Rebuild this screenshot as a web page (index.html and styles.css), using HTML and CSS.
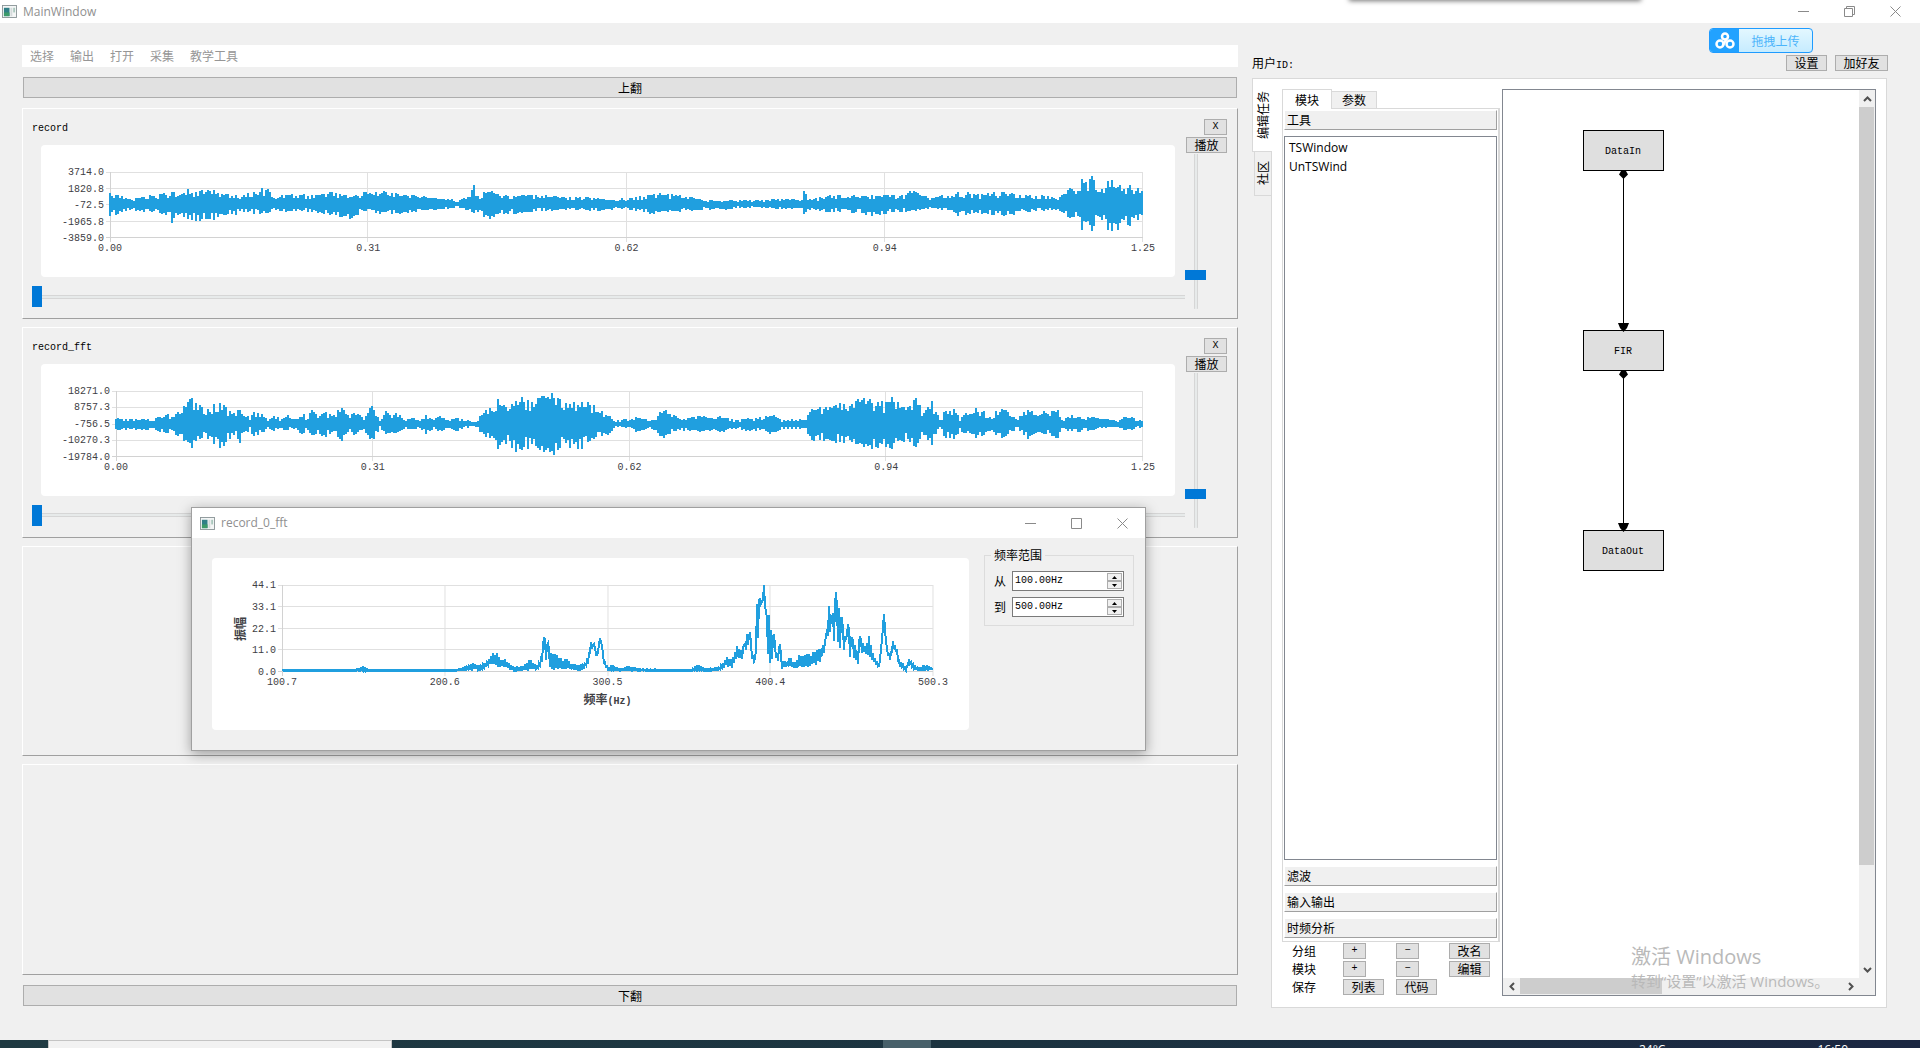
FILE: index.html
```html
<!DOCTYPE html>
<html lang="zh-CN">
<head>
<meta charset="utf-8">
<title>MainWindow</title>
<link rel="stylesheet" href="styles.css">
</head>
<body>
<header class="titlebar">
  <svg class="app-icon" viewBox="0 0 16 14"><rect x="0.5" y="0.5" width="15" height="13" fill="#f4f6f6" stroke="#8b9698"/><rect x="2" y="3" width="6" height="9" fill="#2f7f86"/><rect x="2" y="8" width="6" height="4" fill="#3c9a6a"/><rect x="9" y="3" width="2" height="9" fill="#d5dadb"/><rect x="12" y="3" width="2" height="5" fill="#a9c8bd"/></svg>
  <span class="titlebar-text">MainWindow</span>
  <div class="win-buttons">
    <button aria-label="最小化"><svg viewBox="0 0 11 11"><path d="M0 5.5H11"/></svg></button>
    <button aria-label="还原"><svg viewBox="0 0 11 11"><path d="M0.5 2.5H8.5V10.5H0.5ZM2.5 2.5V0.5H10.5V8.5H8.5"/></svg></button>
    <button aria-label="关闭"><svg viewBox="0 0 11 11"><path d="M0.5 0.5L10.5 10.5M10.5 0.5L0.5 10.5"/></svg></button>
  </div>
  <div class="edge-shadow"></div>
</header>

<main class="workspace">
  <section class="signals">
    <nav class="menubar">
      <button>选择</button><button>输出</button><button>打开</button><button>采集</button><button>教学工具</button>
    </nav>
    <button class="btn page-btn">上翻</button>
    <div class="panels">
      <article class="panel">
        <div class="panel-main">
          <h2 class="mono">record</h2>
          <div class="chart">
            <div class="y-labels"><span>3714.0</span><span>1820.8</span><span>-72.5</span><span>-1965.8</span><span>-3859.0</span></div>
            <svg class="plot" data-plot="record" viewBox="0 0 1033 66" preserveAspectRatio="none"></svg>
            <div class="x-labels"><span>0.00</span><span>0.31</span><span>0.62</span><span>0.94</span><span>1.25</span></div>
          </div>
          <input class="slider" type="range" value="0" aria-label="record 位置">
        </div>
        <div class="panel-side">
          <button class="btn mono close-btn">X</button>
          <button class="btn play-btn">播放</button>
          <input class="slider slider-v" type="range" value="20" aria-label="record 音量">
        </div>
      </article>
      <article class="panel">
        <div class="panel-main">
          <h2 class="mono">record_fft</h2>
          <div class="chart">
            <div class="y-labels"><span>18271.0</span><span>8757.3</span><span>-756.5</span><span>-10270.3</span><span>-19784.0</span></div>
            <svg class="plot" data-plot="filtered" viewBox="0 0 1027 66" preserveAspectRatio="none"></svg>
            <div class="x-labels"><span>0.00</span><span>0.31</span><span>0.62</span><span>0.94</span><span>1.25</span></div>
          </div>
          <input class="slider" type="range" value="0" aria-label="record_fft 位置">
        </div>
        <div class="panel-side">
          <button class="btn mono close-btn">X</button>
          <button class="btn play-btn">播放</button>
          <input class="slider slider-v" type="range" value="20" aria-label="record_fft 音量">
        </div>
      </article>
      <article class="panel"></article>
      <article class="panel"></article>
    </div>
    <button class="btn page-btn">下翻</button>
  </section>

  <section class="editor">
    <div class="user-row">
      <span>用户<span class="mono">ID:</span></span>
      <div class="user-actions"><button class="btn w41">设置</button><button class="btn w53">加好友</button></div>
    </div>
    <div class="side-tabs-widget">
      <div class="side-tabs">
        <button class="side-tab active"><span>编辑任务</span></button>
        <button class="side-tab"><span>社区</span></button>
      </div>
      <div class="side-pane">
        <div class="modules">
          <div class="tabs"><button class="tab active">模块</button><button class="tab">参数</button></div>
          <div class="toolbox">
            <button class="tool-head">工具</button>
            <ul class="tool-list"><li>TSWindow</li><li>UnTSWind</li></ul>
            <button class="tool-head">滤波</button>
            <button class="tool-head">输入输出</button>
            <button class="tool-head">时频分析</button>
          </div>
          <div class="actions">
            <span>分组</span><button class="btn mono w23">+</button><button class="btn mono w23">−</button><button class="btn w41">改名</button>
            <span>模块</span><button class="btn mono w23">+</button><button class="btn mono w23">−</button><button class="btn w41">编辑</button>
            <span>保存</span><button class="btn w41">列表</button><button class="btn w41">代码</button>
          </div>
        </div>
        <div class="canvas">
          <svg class="diagram" width="356" height="888">
            <g stroke="#000" fill="#dfdfdf">
              <rect x="80.5" y="40.5" width="80" height="40"/>
              <rect x="80.5" y="240.5" width="80" height="40"/>
              <rect x="80.5" y="440.5" width="80" height="40"/>
              <path d="M120.5 81V240M120.5 281V440"/>
            </g>
            <g>
              <path d="M118 81H123L125 84.500L120.500 89L116 84.500Z"/><path d="M118 281H123L125 284.500L120.500 289L116 284.500Z"/>
              <path d="M115 233H126L124 238L120.5 242L117 238Z"/><path d="M115 433H126L124 438L120.5 442L117 438Z"/>
            </g>
            <g class="node-labels">
              <text x="120" y="64">DataIn</text><text x="120" y="264">FIR</text><text x="120" y="464">DataOut</text>
            </g>
          </svg>
          <div class="scroll scroll-v">
            <button aria-label="向上"><svg viewBox="0 0 9 6"><path d="M1 5L4.500 1.500L8 5"/></svg></button>
            <div class="thumb"></div><div class="rest"></div>
            <button aria-label="向下"><svg viewBox="0 0 9 6"><path d="M1 1L4.500 4.500L8 1"/></svg></button>
          </div>
          <div class="scroll scroll-h">
            <button aria-label="向左"><svg viewBox="0 0 6 9"><path d="M5 1L1.500 4.500L5 8"/></svg></button>
            <div class="thumb"></div><div class="rest"></div>
            <button aria-label="向右"><svg viewBox="0 0 6 9"><path d="M1 1L4.500 4.500L1 8"/></svg></button>
          </div>
          <div class="corner"></div>
        </div>
      </div>
    </div>
  </section>
</main>

<button class="upload">
  <span class="upload-icon"><svg viewBox="0 0 20 18"><g fill="none" stroke="#fff" stroke-width="2.500"><circle cx="10" cy="4.500" r="3"/><circle cx="5" cy="12" r="3.500"/><circle cx="15" cy="12" r="3.500"/><path d="M11.500 7L7.500 14"/></g></svg></span>
  <span class="upload-text">拖拽上传</span>
</button>

<div class="watermark"><p class="wm-title">激活 Windows</p><p>转到“设置”以激活 Windows。</p></div>

<section class="dialog">
  <header class="dialog-title">
    <svg class="app-icon" viewBox="0 0 16 14"><rect x="0.5" y="0.5" width="15" height="13" fill="#f4f6f6" stroke="#8b9698"/><rect x="2" y="3" width="6" height="9" fill="#2f7f86"/><rect x="2" y="8" width="6" height="4" fill="#3c9a6a"/><rect x="9" y="3" width="2" height="9" fill="#d5dadb"/><rect x="12" y="3" width="2" height="5" fill="#a9c8bd"/></svg>
    <span class="titlebar-text">record_0_fft</span>
    <div class="win-buttons">
      <button aria-label="最小化"><svg viewBox="0 0 11 11"><path d="M0 5.5H11"/></svg></button>
      <button aria-label="最大化"><svg viewBox="0 0 11 11"><path d="M0.5 0.5H10.5V10.5H0.5Z"/></svg></button>
      <button aria-label="关闭"><svg viewBox="0 0 11 11"><path d="M0.5 0.5L10.5 10.5M10.5 0.5L0.5 10.5"/></svg></button>
    </div>
  </header>
  <div class="dialog-body">
    <div class="chart spectrum">
      <div class="y-title">振幅</div>
      <div class="y-labels"><span>44.1</span><span>33.1</span><span>22.1</span><span>11.0</span><span>0.0</span></div>
      <svg class="plot" data-plot="spectrum" viewBox="0 0 651 87" preserveAspectRatio="none"></svg>
      <div class="x-labels"><span>100.7</span><span>200.6</span><span>300.5</span><span>400.4</span><span>500.3</span></div>
      <div class="x-title">频率<span class="mono">(Hz)</span></div>
    </div>
    <fieldset class="range">
      <legend>频率范围</legend>
      <label for="from">从</label>
      <div class="spin"><input id="from" class="mono" value="100.00Hz"><div class="steps"><button aria-label="增加"><svg viewBox="0 0 5 3"><path d="M0 3L2.500 0L5 3Z"/></svg></button><button aria-label="减少"><svg viewBox="0 0 5 3"><path d="M0 0L2.500 3L5 0Z"/></svg></button></div></div>
      <label for="to">到</label>
      <div class="spin"><input id="to" class="mono" value="500.00Hz"><div class="steps"><button aria-label="增加"><svg viewBox="0 0 5 3"><path d="M0 3L2.500 0L5 3Z"/></svg></button><button aria-label="减少"><svg viewBox="0 0 5 3"><path d="M0 0L2.500 3L5 0Z"/></svg></button></div></div>
    </fieldset>
  </div>
</section>

<footer class="taskbar">
  <div class="task-search"></div><div class="task-active"></div>
  <span class="task-temp">24°C</span><span class="task-time">16:50</span>
</footer>
<script src="plots.js"></script>
</body>
</html>
```
FILE: styles.css
```css
* { box-sizing: border-box; margin: 0; padding: 0; }
body {
  height: 100vh;
  display: flex;
  flex-direction: column;
  overflow: hidden;
  position: relative;
  background: #f0f0f0;
  color: #000;
  font: 12px/16px "Noto Sans CJK SC", sans-serif;
}
button, input { font: inherit; color: inherit; border: 0; background: none; border-radius: 0; }
svg { display: block; }
.mono, .y-labels, .x-labels, .node-labels { font-family: "Liberation Mono", monospace; font-size: 10px; }

/* window frames */
.titlebar, .dialog-title { display: flex; align-items: center; background: #fff; flex: none; color: #8f8f8f; }
.titlebar { height: 23px; padding: 0 2px; position: relative; }
.titlebar-text { font-family: "Open Sans", "Noto Sans", sans-serif; margin-left: 6px; }
.app-icon { width: 15px; height: 13px; }
.win-buttons { display: flex; margin-left: auto; align-self: stretch; }
.win-buttons button { width: 46px; display: flex; align-items: center; justify-content: center; }
.win-buttons svg { width: 11px; height: 11px; fill: none; stroke: #8a8a8a; }
.edge-shadow { position: absolute; left: 1350px; top: -6px; width: 290px; height: 6px; box-shadow: 0 0 5px 1px #777; }

.workspace {
  flex: 1;
  min-height: 0;
  display: grid;
  grid-template-columns: minmax(0, 1216fr) minmax(0, 636fr);
  gap: 14px;
  padding: 22px 32px 32px 22px;
}
.signals { display: flex; flex-direction: column; gap: 10px; padding-bottom: 2px; min-height: 0; }
.menubar { height: 22px; background: #fff; display: flex; flex: none; }
.menubar button { padding: 0 8px; color: #969696; }

.btn { background: #e1e1e1; border: 1px solid #adadad; display: flex; align-items: center; justify-content: center; line-height: 14px; }
.page-btn { height: 21px; margin: 0 1px; flex: none; }
.w23 { width: 23px; }
.w41 { width: 41px; }
.w53 { width: 53px; }

.panels { flex: 1; min-height: 0; display: flex; flex-direction: column; gap: 8px; }
.panel {
  flex: 1;
  min-height: 0;
  border: 1px solid;
  border-color: #fff #a0a0a0 #a0a0a0 #fff;
  padding: 10px 10px 9px 9px;
  display: flex;
}
.panel-main { flex: 1; min-width: 0; display: flex; flex-direction: column; }
.panel-main h2 { font-weight: 400; line-height: 19px; }
.panel-side { width: 42px; display: flex; flex-direction: column; align-items: flex-end; }
.close-btn { width: 23px; height: 16px; margin-bottom: 2px; flex: none; }
.play-btn { width: 41px; height: 16px; margin-bottom: 1px; flex: none; }

.slider {
  appearance: none;
  width: 100%;
  height: 21px;
  background: linear-gradient(#d6d6d6 1px, #e7eaea 1px 3px, #d6d6d6 3px) center / 100% 4px no-repeat;
}
.slider::-webkit-slider-thumb { appearance: none; width: 10px; height: 21px; background: #0078d7; }
.slider-v {
  writing-mode: vertical-lr;
  direction: rtl;
  width: 21px;
  height: auto;
  flex: 1;
  min-height: 0;
  align-self: flex-start;
  background: linear-gradient(90deg, #d6d6d6 1px, #e7eaea 1px 3px, #d6d6d6 3px) center / 4px 100% no-repeat;
}
.slider-v::-webkit-slider-thumb { width: 21px; height: 10px; }

/* charts */
.chart {
  background: #fff;
  border-radius: 4px;
  display: grid;
  grid-template-columns: auto minmax(0, 1fr);
  grid-template-rows: 66px auto;
  align-content: start;
  height: 132px;
  margin: 7px 10px 9px 9px;
  padding: 27px 32px 0 21px;
  color: #404044;
}
.y-labels { display: flex; flex-direction: column; justify-content: space-between; text-align: right; line-height: 12px; margin: -5px 0 -7px; padding-right: 6px; }
.plot { width: 100%; height: 100%; overflow: visible; }
.plot path { fill: none; vector-effect: non-scaling-stroke; }
.plot .grid { stroke: #e0e0e0; shape-rendering: crispEdges; }
.plot .axis { stroke: #d2d2d2; shape-rendering: crispEdges; }
.plot .wave { stroke: #209fdf; stroke-width: 2px; shape-rendering: crispEdges; }
.x-labels { grid-column: 2; display: flex; justify-content: space-between; line-height: 12px; margin-top: 5px; }
.x-labels span { width: 0; display: flex; justify-content: center; }

/* editor */
.editor { display: flex; flex-direction: column; gap: 7px; padding-top: 10px; min-height: 0; }
.user-row { display: flex; justify-content: space-between; flex: none; height: 16px; }
.user-actions { display: flex; gap: 8px; }
.side-tabs-widget { flex: 1; min-height: 0; display: flex; margin-right: 1px; }
.side-tabs { width: 20px; margin-right: -1px; display: flex; flex-direction: column; align-items: flex-end; z-index: 1; }
.side-tab { width: 18px; height: 44px; border: 1px solid #d9d9d9; border-top: 0; display: flex; align-items: center; justify-content: center; }
.side-tab.active { width: 20px; height: 74px; background: #fff; border-top: 1px solid #d9d9d9; border-right: 0; }
.side-tab span { writing-mode: vertical-rl; text-orientation: sideways; transform: rotate(180deg); }
.side-pane {
  flex: 1;
  min-width: 0;
  background: #fff;
  border: 1px solid #d9d9d9;
  padding: 10px 10px 11px;
  display: grid;
  grid-template-columns: minmax(0, 218fr) minmax(0, 374fr);
  gap: 2px;
}
.modules { display: flex; flex-direction: column; min-height: 0; padding-bottom: 1px; }
.tabs { display: flex; align-items: flex-end; height: 20px; margin-bottom: -1px; z-index: 1; flex: none; }
.tab { width: 45px; height: 18px; border: 1px solid #d9d9d9; border-left: 0; background: #f0f0f0; line-height: 14px; }
.tab.active { width: 50px; height: 20px; background: #fff; border-left: 1px solid #d9d9d9; border-bottom: 0; }
.toolbox { flex: 1; min-height: 0; border: 1px solid #d9d9d9; border-right-width: 2px; padding: 1px 1px 3px; display: flex; flex-direction: column; gap: 6px; margin-bottom: 1px; }
.tool-head { height: 20px; flex: none; text-align: left; padding-left: 2px; background: #f0f0f0; border: 1px solid; border-color: #fff #a0a0a0 #a0a0a0 #fff; line-height: 18px; }
.tool-list { flex: 1; min-height: 0; border: 1px solid #828790; list-style: none; padding: 1px 4px; font-family: "Open Sans", "Noto Sans", sans-serif; line-height: 19px; }
.actions { flex: none; display: grid; grid-template-columns: 51px 53px 53px 41px; grid-auto-rows: 16px; row-gap: 2px; padding-left: 10px; }

.canvas { border: 1px solid #828790; display: grid; grid-template-columns: minmax(0, 1fr) 16px; grid-template-rows: minmax(0, 1fr) 17px; min-height: 0; }
.diagram { max-width: 100%; }
.node-labels text { text-anchor: middle; }
.scroll { background: #f0f0f0; display: flex; }
.scroll-v { flex-direction: column; }
.scroll button { flex: none; width: 17px; height: 17px; display: flex; align-items: center; justify-content: center; }
.scroll-v button { width: 16px; }
.scroll svg { fill: none; stroke: #505050; stroke-width: 2; height: 9px; }
.scroll-v svg { width: 9px; height: 6px; }
.thumb { background: #cdcdcd; }
.scroll-v .thumb { flex: 87; margin-right: 1px; }
.scroll-v .rest { flex: 11; }
.scroll-h .thumb { flex: 44; margin-bottom: 1px; }
.scroll-h .rest { flex: 56; }
.corner { background: #f0f0f0; }

/* overlays */
.upload {
  position: absolute;
  right: 107px;
  top: 28px;
  width: 104px;
  height: 25px;
  border: 1px solid #1e9bff;
  border-radius: 4px;
  display: flex;
  overflow: hidden;
  background: linear-gradient(#e3f7ff, #c6ecff);
}
.upload-icon { width: 29px; height: 23px; background: #22a2ff; display: flex; align-items: center; justify-content: center; }
.upload-icon svg { width: 20px; height: 18px; }
.upload-text { flex: 1; line-height: 23px; color: #4bb4fb; text-align: center; }
.watermark { position: absolute; right: 92px; bottom: 56px; width: 197px; color: #b9b9b9; font: 15px/22px "Open Sans", "Noto Sans CJK SC", sans-serif; white-space: nowrap; pointer-events: none; }
.watermark .wm-title { font-size: 20px; line-height: 26px; }

.dialog {
  position: absolute;
  left: 191px;
  top: 507px;
  width: 955px;
  height: 244px;
  display: flex;
  flex-direction: column;
  background: #f0f0f0;
  border: 1px solid #a0a0a0;
  box-shadow: 0 3px 12px rgba(0, 0, 0, 0.35);
}
.dialog-title { height: 30px; padding-left: 8px; }
.dialog-body { flex: 1; display: flex; gap: 15px; padding: 20px 11px 20px 20px; align-items: flex-start; }
.spectrum { flex: 1; margin: 0; height: 172px; grid-template-columns: 12px auto minmax(0, 1fr); grid-template-rows: 87px auto auto; padding: 27px 36px 0 22px; }
.y-title { writing-mode: vertical-rl; text-orientation: sideways; transform: rotate(180deg); text-align: center; line-height: 12px; font-weight: 700; }
.spectrum .y-labels { padding-left: 6px; }
.spectrum .x-labels, .x-title { grid-column: 3; }
.x-title { text-align: center; font-weight: 700; margin-top: 2px; }
.range { flex: none; min-width: 0; width: 150px; height: 79px; border: 1px solid #dcdcdc; margin-top: -11px; padding: 8px 9px 0; display: grid; grid-template-columns: 18px minmax(0, 1fr); row-gap: 6px; align-content: start; }
.range legend { padding: 0 3px; margin-left: -3px; height: 16px; }
.range label { line-height: 20px; }
.spin { display: flex; height: 20px; border: 1px solid #7a7a7a; background: #fff; padding: 1px; }
.spin input { flex: 1; min-width: 0; padding-left: 1px; outline: 0; }
.steps { width: 15px; display: flex; flex-direction: column; }
.steps button { flex: 1; min-height: 0; border: 1px solid #adadad; background: #f0f0f0; display: flex; align-items: center; justify-content: center; }
.steps svg { width: 5px; height: 3px; }

.taskbar { flex: none; height: 8px; overflow: hidden; display: flex; background: linear-gradient(90deg, #1f3a42, #1c3440 50%, #1b2742); color: #fff; position: relative; padding-left: 48px; line-height: 12px; font-family: "Open Sans", sans-serif; }
.task-search { width: 344px; background: #f2f2f2; border: 1px solid #c4c4c4; border-bottom: 0; }
.task-active { width: 48px; background: #47606a; margin-left: 491px; }
.task-temp { margin: 4px 0 0 708px; }
.task-time { margin: 4px 0 0 152px; }
```
FILE: plots.js
```js
// Envelope key points: x, upper extent, lower extent.
const data = {
  record: { width: 1033, height: 66, origin: 110, base: 32, rows: [0, 16, 32, 49], keys: "110,11,12 118,9,12 125,7,7 140,6,7 150,9,8 165,11,10 170,11,12 172,14,18 178,10,11 182,9,10 188,15,18 195,12,17 205,15,16 215,14,18 222,10,12 240,9,10 250,12,9 262,15,10 270,15,9 275,9,8 300,10,7 320,9,9 335,13,11 345,9,14 352,8,15 360,9,9 370,16,8 378,12,9 390,13,10 400,9,10 418,9,8 430,6,6 450,5,5 458,3,3 470,8,7 475,18,9 478,9,8 490,14,15 500,9,10 520,9,10 540,9,7 560,7,6 590,7,7 610,5,6 640,7,7 655,10,11 662,11,8 680,9,8 700,5,6 720,4,7 740,4,4 760,4,4 785,5,5 803,4,4 805,13,10 808,5,5 820,6,7 830,9,8 850,9,9 870,9,12 890,10,9 905,10,8 914,13,7 925,8,5 935,7,4 945,9,6 960,12,13 980,10,9 1002,12,13 1020,9,9 1045,9,7 1058,6,6 1063,10,8 1070,15,14 1080,13,14 1083,31,28 1087,19,20 1092,30,28 1097,18,19 1105,18,16 1111,30,31 1114,19,21 1119,20,25 1122,15,15 1130,20,22 1137,19,19 1143,12,10" },
  filtered: { width: 1027, height: 66, origin: 116, base: 33, rows: [0, 16, 33, 49], keys: "116,6,6 130,5,6 155,5,6 160,8,8 175,10,10 182,18,15 192,25,25 200,19,18 207,13,14 215,20,22 222,25,25 228,15,18 235,12,10 240,18,18 245,15,14 250,5,5 256,13,14 262,10,10 268,4,4 275,9,7 280,6,6 290,9,6 295,5,5 302,13,14 307,5,5 313,14,13 320,8,9 326,14,15 333,7,7 342,16,16 350,8,7 355,12,11 362,7,6 368,10,9 372,19,18 378,8,8 380,2,2 385,13,13 393,7,7 400,14,13 406,4,4 413,7,6 420,3,3 427,9,10 434,5,4 440,8,8 448,3,4 457,7,7 465,5,4 478,2,3 480,7,8 490,18,15 497,25,25 504,19,18 517,28,28 527,25,24 537,24,24 545,29,28 556,31,31 562,24,22 572,24,25 587,24,23 600,15,15 610,8,10 615,3,3 630,6,4 637,7,8 648,4,5 657,7,9 664,15,15 672,10,9 680,6,6 700,8,8 715,5,6 722,8,8 735,4,5 750,6,7 765,8,8 773,10,10 782,4,5 800,5,5 806,4,4 812,14,15 818,20,19 828,15,15 840,22,20 850,21,19 860,24,24 868,25,24 876,22,23 884,22,22 892,26,25 900,20,19 908,19,17 917,25,24 922,15,15 932,23,20 938,11,6 941,2,2 946,14,14 955,15,15 960,5,6 972,16,15 985,13,12 990,6,7 1000,16,15 1010,12,12 1017,4,3 1022,10,8 1029,16,15 1037,8,8 1045,13,10 1058,14,14 1062,4,4 1071,9,8 1084,8,8 1100,6,4 1118,3,3 1125,11,11 1132,7,6 1143,3,3" },
  spectrum: { width: 651, height: 87, origin: 282, base: 87, rows: [0, 21, 43, 64], keys: "282,2,1 355,2,1 362,5,1 370,2,1 445,2,1 455,2,1 463,4,2 475,8,3 480,5,2 487,11,5 493,20,8 497,20,4 502,11,5 505,13,4 510,8,2 515,5,0 525,7,2 530,13,1 537,6,3 541,15,6 544,35,14 548,29,8 550,22,3 553,22,2 556,18,3 562,13,2 565,16,2 568,13,2 573,7,3 580,6,2 585,8,5 588,14,8 591,30,22 594,28,22 597,18,15 600,34,25 602,26,18 604,12,8 608,4,2 612,6,2 620,3,1 627,5,2 640,3,1 690,2,1 698,7,1 705,3,1 718,4,2 724,10,4 726,16,6 732,12,3 735,22,8 737,26,12 740,22,12 744,27,12 747,38,24 750,40,25 752,20,12 755,14,10 757,68,25 760,74,20 762,70,35 764,87,22 766,60,18 769,57,5 771,42,12 774,38,10 777,18,11 780,28,10 782,12,2 787,9,7 790,19,6 793,8,3 800,18,4 810,19,4 820,24,8 826,34,22 829,66,38 832,54,32 836,80,14 839,64,25 842,54,22 846,32,20 848,48,14 852,34,14 858,24,5 860,36,18 865,26,18 869,36,16 873,20,10 879,6,4 882,32,28 884,58,34 886,30,18 890,16,12 893,31,22 897,23,18 899,12,4 903,9,4 906,3,1 909,13,9 913,8,3 918,4,2 926,6,2 933,4,3" }
};

function makeRandom(seed) {
  return () => (seed = (seed * 16807) % 2147483647) / 2147483647;
}

function draw(svg, name) {
  const { width, height, origin, base, rows, keys } = data[name];
  const points = keys.split(" ").map(k => k.split(",").map(Number));
  const peaks = new Set(points.filter(p => p[1] > 25).map(p => p[0]));
  const random = makeRandom(name.length * 7919);
  const at = x => {
    let i = 1;
    while (i < points.length - 1 && points[i][0] < x) i++;
    const [a, b] = [points[i - 1], points[i]];
    const t = Math.min(1, (x - a[0]) / (b[0] - a[0]));
    return [a[1] + (b[1] - a[1]) * t, a[2] + (b[2] - a[2]) * t];
  };
  let grid = "";
  rows.forEach(y => { grid += `M-4 ${y}.5H${width}`; });
  for (let i = 1; i <= 4; i++) grid += `M${Math.round(width * i / 4)} 0V${height + 4}`;
  const axis = `M-4 ${height - 0.5}H${width}M0.5 0V${height + 4}`;
  let wave = "";
  if (name === "spectrum") {
    for (let x = 0; x <= width; x++) {
      const [high, low] = at(x + origin);
      const swing = (high - low) * 0.25 * random();
      const top = peaks.has(x + origin);
      const y = top ? base - high : x % 2 ? base - high + swing : base - low - swing;
      wave += (x ? "L" : "M") + x + " " + y.toFixed(1);
    }
  } else {
    for (let x = 0; x <= width; x += 2) {
      const a = at(x + origin), b = at(x + origin + 1);
      const floor = random() < 0.35 ? 0.5 : 0.8;
      const up = Math.max(a[0], b[0]) * (floor + 0.25 * random());
      const down = Math.max(a[1], b[1]) * (floor + 0.25 * random());
      wave += `M${x} ${Math.round(base - up)}V${Math.round(base + down)}`;
    }
  }
  svg.innerHTML = `<path class="grid" d="${grid}"/><path class="axis" d="${axis}"/><path class="wave" d="${wave}"/>`;
}

document.querySelectorAll("[data-plot]").forEach(svg => draw(svg, svg.dataset.plot));
```
